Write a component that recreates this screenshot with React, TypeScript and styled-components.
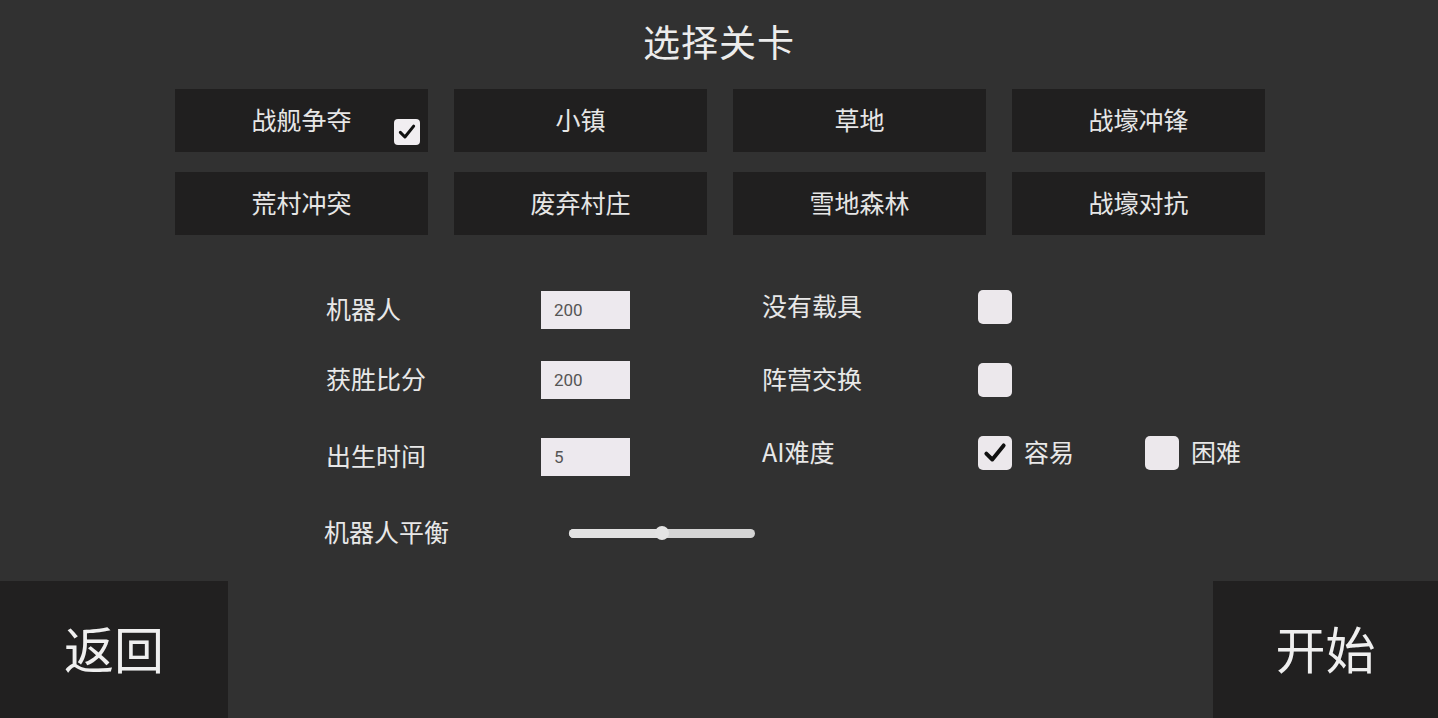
import React, { useState } from 'react';
import styled, { createGlobalStyle } from 'styled-components';

const GlobalStyle = createGlobalStyle`
  html, body {
    margin: 0;
    padding: 0;
    height: 100%;
    background: #313131;
    overflow: hidden;
  }
  #root {
    height: 100%;
  }
  * {
    box-sizing: border-box;
  }
`;

const FONT = `"Noto Sans CJK SC", "Noto Sans", Roboto, sans-serif`;

const Page = styled.div`
  height: 100vh;
  display: flex;
  flex-direction: column;
  background: #313131;
  font-family: ${FONT};
  color: #ececec;
`;

const Title = styled.h1`
  margin: 0;
  height: 89px;
  line-height: 82px;
  text-align: center;
  font-size: 37px;
  font-weight: 400;
  letter-spacing: 1px;
`;

const MapGrid = styled.div`
  width: 1090px;
  margin-left: 175px;
  display: grid;
  grid-template-columns: repeat(4, 253px);
  grid-auto-rows: 63px;
  column-gap: 26px;
  row-gap: 20px;
`;

const MapTile = styled.div`
  position: relative;
  background: #201f1f;
  display: flex;
  align-items: center;
  justify-content: center;
  padding-bottom: 4px;
  font-size: 25px;
  color: #e6e6e6;
  cursor: pointer;
`;

const TileCheck = styled.div`
  position: absolute;
  right: 8px;
  bottom: 7px;
  width: 26px;
  height: 26px;
  border-radius: 4px;
  background: #f1eef1;
  display: flex;
  align-items: center;
  justify-content: center;
`;

const Settings = styled.div`
  display: flex;
  padding-left: 324px;
  margin-top: 55px;
`;

const LeftCol = styled.div`
  width: 438px;
  display: flex;
  flex-direction: column;
`;

const RightCol = styled.div`
  display: flex;
  flex-direction: column;
  gap: 39px;
`;

const FieldRow = styled.div<{ $gap: number; $indent?: number }>`
  display: flex;
  align-items: center;
  height: 40px;
  margin-top: ${(p) => p.$gap}px;
  padding-left: ${(p) => p.$indent ?? 2}px;
`;

const Label = styled.span<{ $w: number }>`
  width: ${(p) => p.$w}px;
  flex-shrink: 0;
  padding-bottom: 5px;
  font-size: 25px;
  color: #e8e8e8;
`;

const NumberBox = styled.input`
  width: 89px;
  height: 38px;
  border: none;
  outline: none;
  background: #ede9ee;
  color: #555;
  font-family: Roboto, "Liberation Sans", sans-serif;
  font-size: 17px;
  padding: 0 0 0 13px;
`;

const SliderTrack = styled.div`
  position: relative;
  width: 186px;
  height: 9px;
  border-radius: 5px;
  background: #d4d4d4;
`;

const SliderFill = styled.div`
  height: 100%;
  border-radius: 5px;
  background: #e2e2e2;
`;

const SliderThumb = styled.div`
  position: absolute;
  top: 50%;
  width: 14px;
  height: 14px;
  margin: -7px 0 0 -7px;
  border-radius: 50%;
  background: #e4e4e4;
`;

const ToggleRow = styled.div`
  display: flex;
  align-items: center;
  height: 34px;
`;

const Option = styled.label<{ $w?: number }>`
  display: flex;
  align-items: center;
  gap: 12px;
  width: ${(p) => (p.$w ? `${p.$w}px` : 'auto')};
  font-size: 25px;
  color: #e8e8e8;
  cursor: pointer;
`;

const OptionText = styled.span`
  padding-bottom: 5px;
`;

const Box = styled.div`
  width: 34px;
  height: 34px;
  border-radius: 5px;
  background: #ece8ec;
  display: flex;
  align-items: center;
  justify-content: center;
  flex-shrink: 0;
`;

const BottomBar = styled.div`
  margin-top: auto;
  display: flex;
  justify-content: space-between;
  height: 137px;
`;

const BigButton = styled.button<{ $w: number }>`
  width: ${(p) => p.$w}px;
  height: 100%;
  border: none;
  background: #212020;
  color: #efefef;
  font-family: ${FONT};
  font-size: 50px;
  font-weight: 400;
  padding: 0 0 6px;
  cursor: pointer;
`;

const Tick = ({ size }: { size: number }) => (
  <svg width={size} height={size} viewBox="0 0 24 24">
    <path d="M4 12.5 L9.5 18 L20 5" fill="none" stroke="#111" strokeWidth="3.6" strokeLinecap="round" strokeLinejoin="round" />
  </svg>
);

const maps = ['战舰争夺', '小镇', '草地', '战壕冲锋', '荒村冲突', '废弃村庄', '雪地森林', '战壕对抗'];

export default function App() {
  const [selected, setSelected] = useState(0);
  const [noVehicle, setNoVehicle] = useState(false);
  const [swapTeam, setSwapTeam] = useState(false);
  const [hard, setHard] = useState(false);
  const balance = 0.5;

  return (
    <Page>
      <GlobalStyle />
      <Title>选择关卡</Title>
      <MapGrid>
        {maps.map((m, i) => (
          <MapTile key={m} onClick={() => setSelected(i)}>
            {m}
            {selected === i && (
              <TileCheck>
                <Tick size={20} />
              </TileCheck>
            )}
          </MapTile>
        ))}
      </MapGrid>

      <Settings>
        <LeftCol>
          <FieldRow $gap={0}>
            <Label $w={215}>机器人</Label>
            <NumberBox defaultValue="200" />
          </FieldRow>
          <FieldRow $gap={30}>
            <Label $w={215}>获胜比分</Label>
            <NumberBox defaultValue="200" />
          </FieldRow>
          <FieldRow $gap={37}>
            <Label $w={215}>出生时间</Label>
            <NumberBox defaultValue="5" />
          </FieldRow>
          <FieldRow $gap={36} $indent={0}>
            <Label $w={245}>机器人平衡</Label>
            <SliderTrack>
              <SliderFill style={{ width: `${balance * 100}%` }} />
              <SliderThumb style={{ left: `${balance * 100}%` }} />
            </SliderTrack>
          </FieldRow>
        </LeftCol>

        <RightCol>
          <ToggleRow>
            <Label $w={216}>没有载具</Label>
            <Box onClick={() => setNoVehicle(!noVehicle)}>{noVehicle && <Tick size={26} />}</Box>
          </ToggleRow>
          <ToggleRow>
            <Label $w={216}>阵营交换</Label>
            <Box onClick={() => setSwapTeam(!swapTeam)}>{swapTeam && <Tick size={26} />}</Box>
          </ToggleRow>
          <ToggleRow>
            <Label $w={216}>AI难度</Label>
            <Option $w={167} onClick={() => setHard(false)}>
              <Box>{!hard && <Tick size={26} />}</Box>
              <OptionText>容易</OptionText>
            </Option>
            <Option onClick={() => setHard(true)}>
              <Box>{hard && <Tick size={26} />}</Box>
              <OptionText>困难</OptionText>
            </Option>
          </ToggleRow>
        </RightCol>
      </Settings>

      <BottomBar>
        <BigButton $w={228}>返回</BigButton>
        <BigButton $w={225}>开始</BigButton>
      </BottomBar>
    </Page>
  );
}
